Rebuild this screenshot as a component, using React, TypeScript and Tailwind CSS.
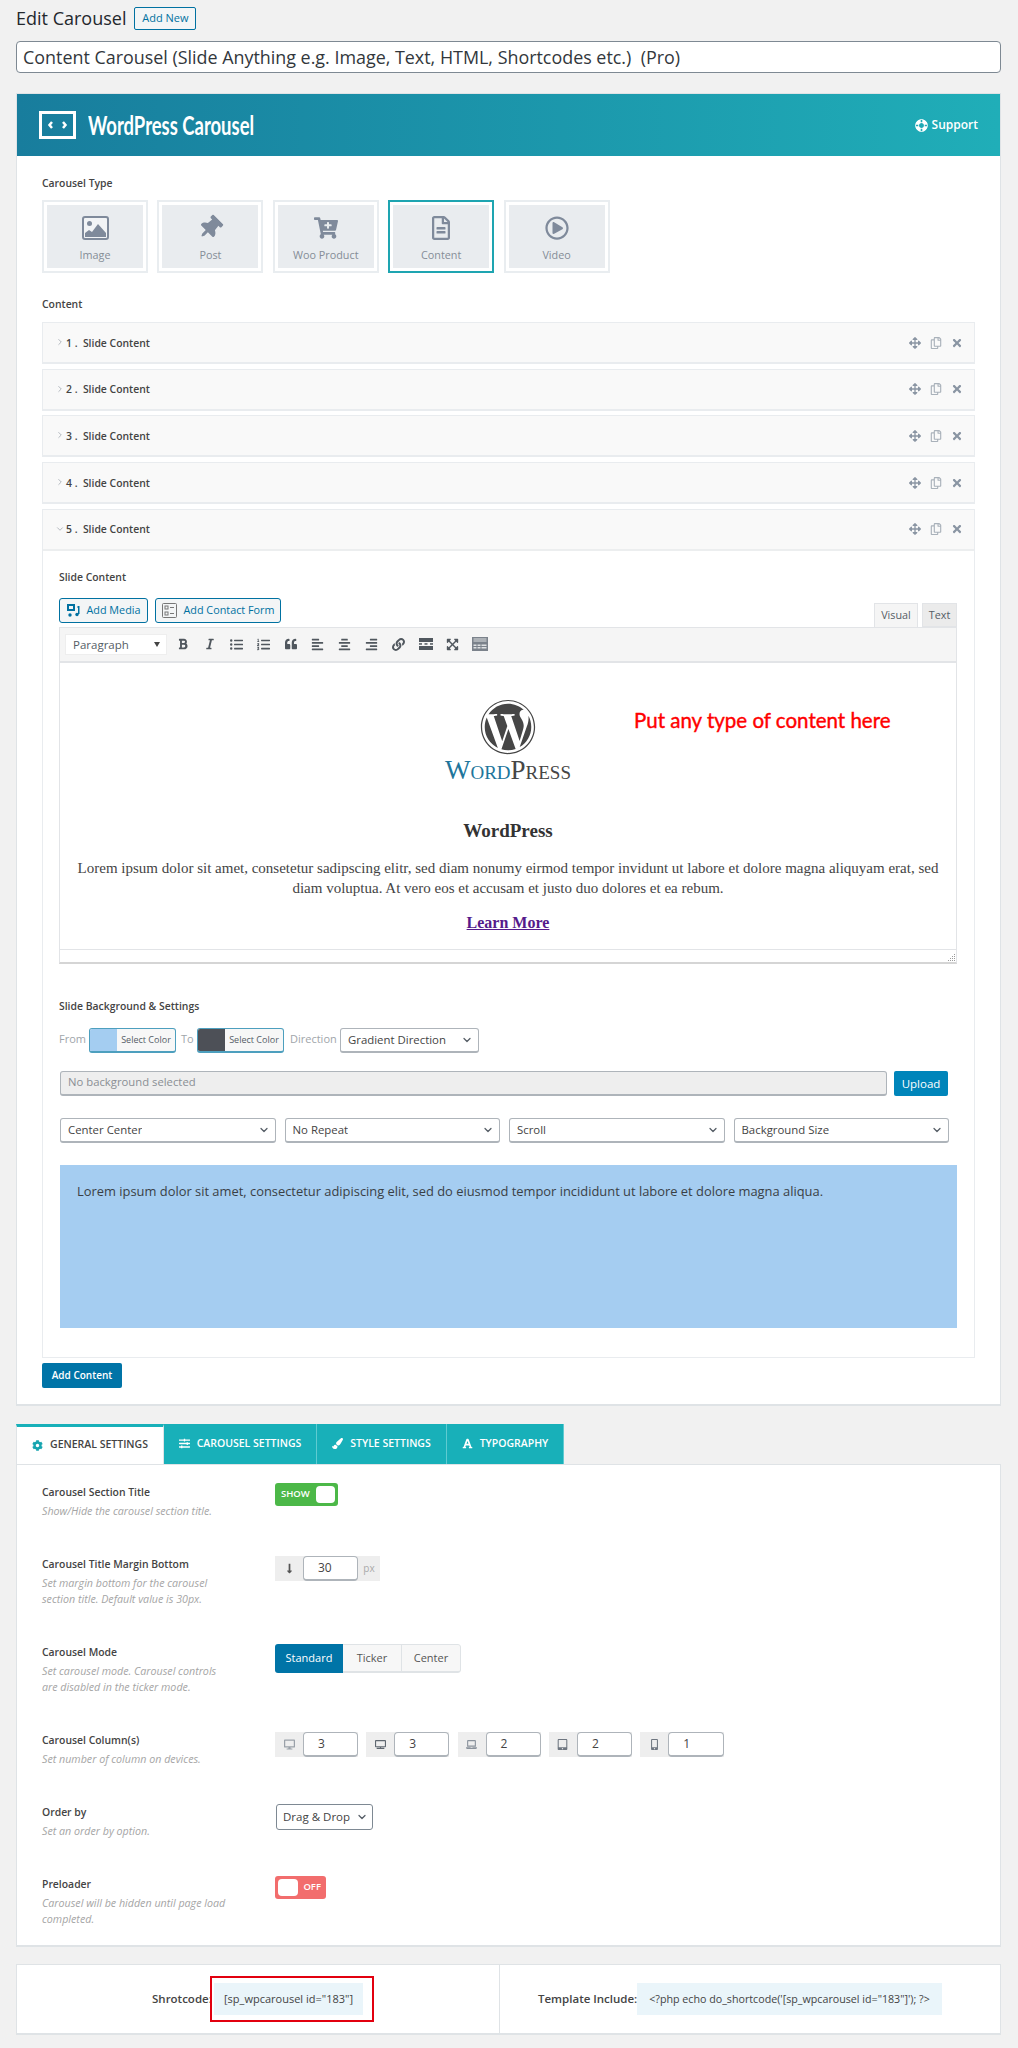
import React from "react";
import {
  FaThumbtack, FaCartPlus, FaRegFileAlt, FaRegPlayCircle, FaLifeRing, FaArrowsAlt, FaRegCopy, FaTimes,
  FaBold, FaItalic, FaListUl, FaListOl, FaQuoteLeft, FaAlignLeft, FaAlignCenter, FaAlignRight, FaLink, FaExpandArrowsAlt,
  FaCog, FaSlidersH, FaPaintBrush, FaFont, FaDesktop, FaTv, FaLaptop, FaTabletAlt, FaMobileAlt, FaLongArrowAltDown, FaWordpress,
} from "react-icons/fa";
import { ChevronRight, ChevronDown } from "lucide-react";

const font = "[font-family:'Open_Sans',sans-serif]";
const serif = "[font-family:'Liberation_Serif',serif]";

function Label({ children, className = "" }: { children: React.ReactNode; className?: string }) {
  return <div className={`text-[10.4px] leading-4 font-semibold text-[#444] ${className}`}>{children}</div>;
}

function TypeCard({ icon, label, active }: { icon: React.ReactNode; label: string; active?: boolean }) {
  return (
    <div className={`w-[106px] h-[73px] p-[3px] bg-white border-2 ${active ? "border-[#1ea5b1]" : "border-[#e9edf0]"}`}>
      <div className="w-full h-full bg-[#e9ecef] flex flex-col items-center pt-[9px] text-[#7f8a9b]">
        <div className="h-[28px] flex items-center justify-center text-[24px]">{icon}</div>
        <div className="mt-[5px] text-[10.8px] leading-4 text-[#858d97]">{label}</div>
      </div>
    </div>
  );
}

function RowHead({ n, open }: { n: number; open?: boolean }) {
  return (
    <div className={`bg-[#f9f9f9] flex items-center pl-[12px] pr-[11px] pt-[2px] ${open ? "h-[41px] border-b-2 border-[#eceeef]" : "h-[39px]"}`}>
      {open ? <ChevronDown size={10} strokeWidth={1.5} className="text-[#8a929c] -mt-[3px]" /> : <ChevronRight size={10} strokeWidth={1.5} className="text-[#8a929c] -mt-[3px]" />}
      <span className="ml-[1px] text-[10.4px] font-semibold text-[#444] whitespace-pre">{n} .  Slide Content</span>
      <div className="ml-auto flex items-center gap-[9px] text-[#8a95a3] -mt-[2px]">
        <FaArrowsAlt size={12} />
        <FaRegCopy size={12} className="text-[#a9b1ba]" />
        <FaTimes size={12} />
      </div>
    </div>
  );
}

function Row({ n }: { n: number }) {
  return (
    <div className="mb-[4.7px] border border-[#e9ecef] border-b-2">
      <RowHead n={n} />
    </div>
  );
}

function Select({ w, label }: { w: string; label: string }) {
  return (
    <div className={`${w} h-[25px] shrink-0 bg-white border border-[#aeb4ba] border-b-2 rounded-[3px] flex items-center justify-between pl-[7px] pr-[5px] text-[11.4px] text-[#444]`}>
      <span className="truncate">{label}</span>
      <ChevronDown size={12} className="text-[#555d66] shrink-0" strokeWidth={2.5} />
    </div>
  );
}

function ColorBtn({ color }: { color: string }) {
  return (
    <div className="w-[87px] h-[25px] shrink-0 flex rounded-[3px] border border-[#4d9fbe] border-b-2 overflow-hidden bg-[#f7f7f7]">
      <div className="w-[27px] h-full" style={{ background: color }} />
      <div className="flex-1 flex items-center justify-center text-[9px] text-[#555d66]">Select Color</div>
    </div>
  );
}

function NumberGroup({ icon, value, w = "w-[83px]" }: { icon: React.ReactNode; value: string; w?: string }) {
  return (
    <div className={`${w} h-[25px] flex bg-[#eeeeee]`}>
      <div className="w-[28px] flex items-center justify-center text-[#7c8591] text-[11px]">{icon}</div>
      <div className="flex-1 border border-[#aeb4ba] border-b-2 rounded-[4px] bg-white flex items-center pl-[14px] text-[12px] text-[#444]">{value}</div>
    </div>
  );
}

function SettingRow({ title, desc, children }: { title: string; desc: string[]; children: React.ReactNode }) {
  return (
    <div className="flex pb-[37px]">
      <div className="w-[233px] shrink-0">
        <Label>{title}</Label>
        <div className="mt-[3px]">
          {desc.map((d) => (
            <div key={d} className="text-[10.7px] leading-4 italic text-[#a5a5a5]">{d}</div>
          ))}
        </div>
      </div>
      <div>{children}</div>
    </div>
  );
}

function Toolbar() {
  const cls = "w-[27px] flex items-center justify-center text-[#50575e]";
  return (
    <div className="h-[36px] bg-[#f5f5f5] border border-[#e2e4e7] border-b-2 flex items-center pl-[5px]">
      <div className="w-[102px] h-[21px] bg-white border border-[#eeeeee] flex items-center justify-between pl-[7px] pr-[6px] text-[11.500px] text-[#555d66]">
        Paragraph
        <span className="w-0 h-0 border-x-[3.5px] border-x-transparent border-t-[5px] border-t-[#444]" />
      </div>
      <div className="flex ml-[2px]">
        <span className={cls}><FaBold size={12} /></span>
        <span className={cls}><FaItalic size={12} /></span>
        <span className={cls}><FaListUl size={13} /></span>
        <span className={cls}><FaListOl size={13} /></span>
        <span className={cls}><FaQuoteLeft size={12} /></span>
        <span className={cls}><FaAlignLeft size={13} /></span>
        <span className={cls}><FaAlignCenter size={13} /></span>
        <span className={cls}><FaAlignRight size={13} /></span>
        <span className={cls}><FaLink size={13} /></span>
        <span className={cls}>
          <svg width="14" height="14" viewBox="0 0 14 14" fill="currentColor"><rect x="0" y="1" width="14" height="4" /><rect x="0" y="6.2" width="3" height="1.5" /><rect x="5.5" y="6.2" width="3" height="1.5" /><rect x="11" y="6.2" width="3" height="1.5" /><rect x="0" y="9" width="14" height="4" /></svg>
        </span>
        <span className={cls}><FaExpandArrowsAlt size={13} /></span>
        <span className={cls}>
          <svg width="16" height="16" viewBox="0 0 16 16"><path d="M0 1h16v14H0z" fill="#7b828b" /><path d="M1.500 2.500h13v1h-13zM1.500 4.500h13v1h-13zM1.500 8.500h3V10h-3zM5.500 8.500h3V10h-3zM9.500 8.500h5V10h-5zM1.500 11h3v1.500h-3zM5.500 11h3v1.500h-3zM9.500 11h5v1.500h-5z" fill="#dfe1e3" /></svg>
        </span>
      </div>
    </div>
  );
}

export default function App() {
  return (
    <div className={`${font} bg-[#f1f1f1] pl-4 pr-[17px] pt-[7px] pb-[13px] text-[#444]`}>
      <div className="flex items-center h-[23px]">
        <h1 className="text-[18px] text-[#23282d] leading-[23px]">Edit Carousel</h1>
        <div className="ml-[8px] w-[62px] h-[23px] rounded-[2px] border border-[#0071a1] bg-[#f3f5f6] flex items-center justify-center text-[11px] text-[#0071a1]">Add New</div>
      </div>
      <input
        readOnly
        value="Content Carousel (Slide Anything e.g. Image, Text, HTML, Shortcodes etc.)  (Pro)"
        className="mt-[11px] w-full h-[32px] bg-white border border-[#7e8993] rounded-[4px] px-[6px] text-[17.900px] text-[#32373c] outline-none"
      />

      <div className="mt-[20px] bg-white border border-[#dfe3e6] border-b-2">
        <div className="h-[62px] bg-gradient-to-r from-[#187d9d] to-[#20aeb8] flex items-center pl-[22px] pr-[22px]">
          <svg width="37" height="28" viewBox="0 0 37 28" fill="none" stroke="white">
            <rect x="1.5" y="1.5" width="34" height="25" strokeWidth="3" />
            <path d="M13 11 10.500 14l2.500 3M24 11l2.500 3-2.500 3" strokeWidth="2.500" />
          </svg>
          <span className="ml-[12px] text-[26px] leading-none font-bold text-white whitespace-nowrap origin-left scale-x-[0.71] [font-family:'Lato',sans-serif]">WordPress Carousel</span>
          <div className="ml-auto flex items-center gap-[4px] text-white text-[12px] font-semibold">
            <FaLifeRing size={13} className="rotate-45" /> Support
          </div>
        </div>

        <div className="px-[25px] pt-[19px] pb-[16px]">
          <Label>Carousel Type</Label>
          <div className="mt-[9px] flex gap-[9.4px]">
            <TypeCard
              label="Image"
              icon={
                <svg width="27" height="24" viewBox="0 0 27 24">
                  <rect x="1" y="1" width="25" height="22" rx="2" fill="#f2f4f6" stroke="#7f8a9b" strokeWidth="2" />
                  <circle cx="7.500" cy="7.500" r="2.500" fill="#7f8a9b" />
                  <path d="M3 21v-4l4-3 3 2 6-8 8 9v4z" fill="#7f8a9b" />
                </svg>
              }
            />
            <TypeCard label="Post" icon={<FaThumbtack className="rotate-45" />} />
            <TypeCard label="Woo Product" icon={<FaCartPlus />} />
            <TypeCard label="Content" active icon={<FaRegFileAlt />} />
            <TypeCard label="Video" icon={<FaRegPlayCircle />} />
          </div>
          <Label className="mt-[23px]">Content</Label>
          <div className="mt-[10px]">
            <Row n={1} />
            <Row n={2} />
            <Row n={3} />
            <Row n={4} />
            <div className="border border-[#e9ecef]">
              <RowHead n={5} open />
              <div className="pl-[16px] pr-[17px] pt-[18px] pb-[29px]">
                <Label>Slide Content</Label>
                <div className="mt-[13px] h-[29px] flex">
                  <div className="h-[25px] w-[89px] flex items-center justify-center gap-[6px] rounded-[3px] border border-[#0071a1] bg-[#f3f5f6] text-[10.800px] text-[#0071a1]">
                    <svg width="14" height="14" viewBox="0 0 14 14" fill="#0071a1"><path d="M0 1h8v7H0zM2 3v3h4V3z" fillRule="evenodd" /><circle cx="3" cy="12" r="1.700" /><circle cx="10" cy="11.500" r="1.700" /><path d="M10.500 3h2v8h-1.500V5h-.5z" /></svg>
                    Add Media
                  </div>
                  <div className="ml-[7px] h-[25px] w-[126px] flex items-center justify-center gap-[7px] rounded-[3px] border border-[#0071a1] bg-[#f3f5f6] text-[10.800px] text-[#0071a1]">
                    <svg width="15" height="15" viewBox="0 0 15 15" fill="none" stroke="#777"><rect x=".5" y=".5" width="14" height="14" rx="1" /><rect x="3" y="3" width="3" height="3" /><rect x="3" y="9" width="3" height="3" /><path d="M8 4.500h4M8 10.500h4" /></svg>
                    Add Contact Form
                  </div>
                  <div className="ml-auto flex items-end gap-[4px] text-[10.800px]">
                    <div className="w-[44px] h-[24px] bg-[#f5f5f5] border border-[#e2e4e7] border-b-0 flex items-center justify-center text-[#555d66]">Visual</div>
                    <div className="w-[35px] h-[24px] bg-[#ebebeb] border border-[#e2e4e7] flex items-center justify-center text-[#555d66]">Text</div>
                  </div>
                </div>
                <Toolbar />
                <div className="h-[286px] border-x border-[#e2e4e7] bg-white relative">
                  <div className="flex flex-col items-center pt-[36px]">
                    <FaWordpress size={56} className="text-[#464646]" />
                    <div className={`${serif} mt-[2px] text-[27px] leading-[26px] [font-variant:small-caps] whitespace-nowrap`}>
                      <span className="text-[#21759b]">Word</span><span className="text-[#464646]">Press</span>
                    </div>
                    <div className={`${serif} mt-[36px] text-[19px] leading-[24px] font-bold text-[#333]`}>WordPress</div>
                    <p className={`${serif} mt-[15px] text-center text-[15px] leading-[20px] text-[#444] whitespace-nowrap`}>
                      Lorem ipsum dolor sit amet, consetetur sadipscing elitr, sed diam nonumy eirmod tempor invidunt ut labore et dolore magna aliquyam erat, sed
                      <br />
                      diam voluptua. At vero eos et accusam et justo duo dolores et ea rebum.
                    </p>
                    <a className={`${serif} mt-[15px] text-[16px] leading-[20px] font-bold underline text-[#551a8b]`}>Learn More</a>
                  </div>
                  <div className="absolute left-[574px] top-[42px] text-[20.500px] leading-[30px] text-[#ff0000] [font-family:'Lato',sans-serif] [-webkit-text-stroke:0.4px_#ff0000] whitespace-nowrap">Put any type of content here</div>
                </div>
                <div className="h-[15px] border border-[#e2e4e7] border-b-2 border-b-[#d5d5d5] bg-white flex justify-end items-end pr-[1px] pb-[1px]">
                  <svg width="8" height="8" viewBox="0 0 8 8" fill="#9a9a9a"><path d="M7 1h1v1H7zM5 3h1v1H5zM7 3h1v1H7zM3 5h1v1H3zM5 5h1v1H5zM7 5h1v1H7zM1 7h1v1H1zM3 7h1v1H3zM5 7h1v1H5zM7 7h1v1H7z" /></svg>
                </div>

                <Label className="mt-[34px]">Slide Background &amp; Settings</Label>
                <div className="mt-[14px] flex items-start text-[11px] text-[#a0a5aa]">
                  <span className="w-[30px] leading-[22px]">From</span>
                  <ColorBtn color="#a4cdf1" />
                  <span className="w-[21px] pl-[5px] leading-[22px]">To</span>
                  <ColorBtn color="#4d5057" />
                  <span className="w-[56px] pl-[6px] leading-[22px]">Direction</span>
                  <Select w="w-[139px]" label="Gradient Direction" />
                </div>
                <div className="mt-[18px] ml-px flex gap-[7px]">
                  <div className="w-[827px] h-[25px] bg-[#eeeeee] border border-[#aeb4ba] border-b-2 rounded-[3px] flex items-center pl-[7px] text-[11.300px] text-[#8a8f94]">No background selected</div>
                  <div className="w-[54px] h-[25px] bg-[#0085ba] rounded-[2px] flex items-center justify-center text-[11.500px] text-white">Upload</div>
                </div>
                <div className="mt-[22px] ml-px flex gap-[9px] w-[889px]">
                  <Select w="w-[215.500px]" label="Center Center" />
                  <Select w="w-[215.500px]" label="No Repeat" />
                  <Select w="w-[215.500px]" label="Scroll" />
                  <Select w="w-[215.500px]" label="Background Size" />
                </div>
                <div className="mt-[22px] ml-px h-[163px] bg-[#a5cdf1] px-[17px] pt-[16px] text-[12.900px] leading-5 text-[#3a3f45]">
                  Lorem ipsum dolor sit amet, consectetur adipiscing elit, sed do eiusmod tempor incididunt ut labore et dolore magna aliqua.
                </div>
              </div>
            </div>
          </div>
          <div className="mt-[5px] w-[80px] h-[25px] bg-[#0074a7] rounded-[2px] flex items-center justify-center text-[10px] font-semibold text-white">Add Content</div>
        </div>
      </div>

      <div className="mt-[18px] flex h-[40px] relative">
        <div className="w-[148px] bg-white border-t-[3px] border-x border-t-[#18b0b9] border-x-[#dfe3e6] flex items-center justify-center gap-[7px] text-[10.500px] font-semibold text-[#444]">
          <FaCog size={11} className="text-[#17a5b0]" /> GENERAL SETTINGS
        </div>
        {[
          { w: "w-[153px]", icon: <FaSlidersH size={11} />, t: "CAROUSEL SETTINGS" },
          { w: "w-[130px]", icon: <FaPaintBrush size={11} />, t: "STYLE SETTINGS" },
          { w: "w-[117px]", icon: <FaFont size={11} />, t: "TYPOGRAPHY" },
        ].map((x) => (
          <div key={x.t} className={`${x.w} bg-[#18b0b9] border-r border-[#5fcbd1] flex items-center justify-center gap-[7px] text-[10.500px] font-semibold text-white`}>
            {x.icon} {x.t}
          </div>
        ))}
      </div>
      <div className="bg-white border border-[#dfe3e6] border-b-2 px-[25px] pt-[19px] h-[483px]">
        <SettingRow title="Carousel Section Title" desc={["Show/Hide the carousel section title."]}>
          <div className="-mt-px w-[63px] h-[23px] rounded-[3px] bg-[#4cb848] flex items-center justify-between pl-[6px] pr-[3px] text-[9.500px] font-semibold text-white">
            SHOW
            <span className="w-[19px] h-[17px] bg-white rounded-[4px]" />
          </div>
        </SettingRow>
        <SettingRow title="Carousel Title Margin Bottom" desc={["Set margin bottom for the carousel", "section title. Default value is 30px."]}>
          <div className="flex h-[25px] w-[105px] bg-[#eeeeee]">
            <div className="w-[28px] flex items-center justify-center text-[#555] text-[11px]"><FaLongArrowAltDown /></div>
            <div className="w-[55px] border border-[#aeb4ba] border-b-2 rounded-[4px] bg-white flex items-center pl-[14px] text-[12px]">30</div>
            <div className="flex-1 flex items-center justify-center text-[10px] text-[#aaa]">px</div>
          </div>
        </SettingRow>
        <SettingRow title="Carousel Mode" desc={["Set carousel mode. Carousel controls", "are disabled in the ticker mode."]}>
          <div className="flex h-[29px] text-[11px] rounded-[3px] overflow-hidden">
            <div className="w-[68px] bg-[#0074a7] text-white flex items-center justify-center">Standard</div>
            <div className="w-[59px] bg-[#f7f7f7] text-[#555] border border-[#dfe3e6] border-l-0 border-b-2 flex items-center justify-center">Ticker</div>
            <div className="w-[59px] bg-[#f7f7f7] text-[#555] border border-[#dfe3e6] border-l-0 border-b-2 rounded-r-[3px] flex items-center justify-center">Center</div>
          </div>
        </SettingRow>
        <SettingRow title="Carousel Column(s)" desc={["Set number of column on devices."]}>
          <div className="flex gap-[8.300px]">
            <NumberGroup icon={<FaDesktop className="text-[#9aa1a9]" />} value="3" />
            <NumberGroup icon={<FaTv className="text-[#5f6770]" />} value="3" />
            <NumberGroup icon={<FaLaptop className="text-[#8a929c]" />} value="2" />
            <NumberGroup icon={<FaTabletAlt className="text-[#6e7680]" />} value="2" />
            <NumberGroup icon={<FaMobileAlt className="text-[#6e7680]" />} value="1" w="w-[84px]" />
          </div>
        </SettingRow>
        <SettingRow title="Order by" desc={["Set an order by option."]}>
          <div className="ml-px w-[97px] h-[26px] border border-[#7e8993] rounded-[3px] flex items-center justify-between pl-[6px] pr-[4px] text-[11.500px]">
            Drag &amp; Drop
            <ChevronDown size={12} strokeWidth={2.5} className="text-[#555d66]" />
          </div>
        </SettingRow>
        <SettingRow title="Preloader" desc={["Carousel will be hidden until page load", "completed."]}>
          <div className="w-[51px] h-[23px] rounded-[3px] bg-[#f26d6d] flex items-center justify-between pl-[3px] pr-[5px] text-[9.500px] font-semibold text-white">
            <span className="w-[20px] h-[17px] bg-white rounded-[4px]" />
            OFF
          </div>
        </SettingRow>
      </div>

      <div className="mt-[17px] h-[71px] bg-white border border-[#dfe3e6] border-b-2 flex">
        <div className="w-[483px] border-r border-[#dfe3e6] flex items-center pl-[135px] relative">
          <span className="w-[62px] text-[11.500px] font-semibold text-[#444] whitespace-nowrap">Shrotcode:</span>
          <code className="w-[149px] h-[32px] bg-[#eaf5fa] flex items-center justify-center text-[11px] text-[#444] [font-family:'Open_Sans',sans-serif]">[sp_wpcarousel id="183"]</code>
          <div className="absolute left-[193px] top-[11px] w-[164px] h-[46px] border-2 border-[#e2000f]" />
        </div>
        <div className="flex-1 flex items-center pl-[38px]">
          <span className="w-[99px] text-[11.500px] font-semibold text-[#444] whitespace-nowrap">Template Include:</span>
          <code className="w-[305px] h-[32px] bg-[#eaf5fa] flex items-center justify-center text-[10.700px] text-[#444] [font-family:'Open_Sans',sans-serif]">&lt;?php echo do_shortcode('[sp_wpcarousel id="183"]'); ?&gt;</code>
        </div>
      </div>
    </div>
  );
}
